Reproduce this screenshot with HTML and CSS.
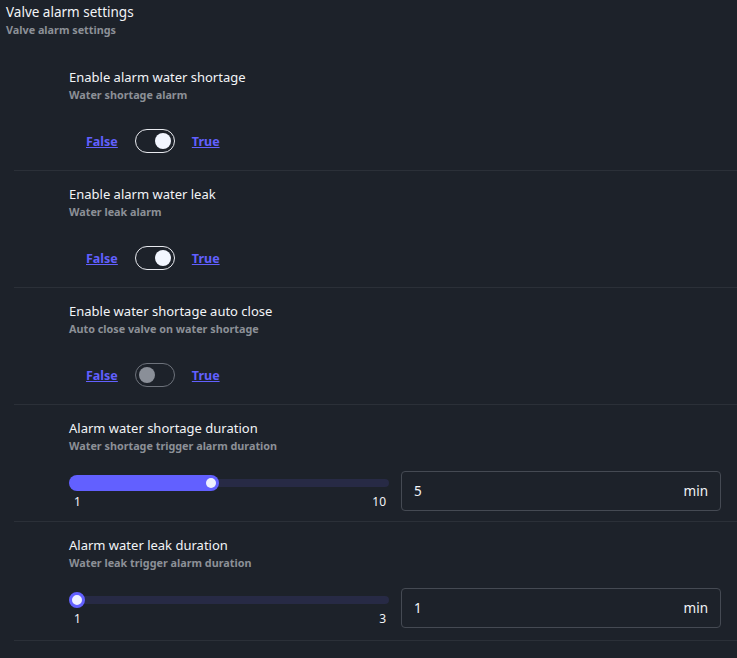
FILE: index.html
```html
<!DOCTYPE html>
<html lang="en">
<head>
    <meta charset="UTF-8">
    <title>Valve alarm settings</title>
    <link rel="stylesheet" href="styles.css">
</head>
<body>
    <div class="header">
        <h1>Valve alarm settings</h1>
        <p>Valve alarm settings</p>
    </div>

    <div class="settings">
        <div class="row">
            <div class="label">Enable alarm water shortage</div>
            <div class="desc">Water shortage alarm</div>
            <div class="toggle-line">
                <a href="#" class="opt">False</a>
                <span class="switch on"><span class="knob"></span></span>
                <a href="#" class="opt">True</a>
            </div>
        </div>

        <div class="row">
            <div class="label">Enable alarm water leak</div>
            <div class="desc">Water leak alarm</div>
            <div class="toggle-line">
                <a href="#" class="opt">False</a>
                <span class="switch on"><span class="knob"></span></span>
                <a href="#" class="opt">True</a>
            </div>
        </div>

        <div class="row">
            <div class="label">Enable water shortage auto close</div>
            <div class="desc">Auto close valve on water shortage</div>
            <div class="toggle-line">
                <a href="#" class="opt">False</a>
                <span class="switch"><span class="knob"></span></span>
                <a href="#" class="opt">True</a>
            </div>
        </div>

        <div class="row">
            <div class="label">Alarm water shortage duration</div>
            <div class="desc">Water shortage trigger alarm duration</div>
            <div class="slider-line">
                <div class="slider">
                    <div class="track">
                        <div class="fill" style="width: 47%"><span class="dot"></span></div>
                    </div>
                    <div class="ends"><span>1</span><span>10</span></div>
                </div>
                <div class="field"><span>5</span><span>min</span></div>
            </div>
        </div>

        <div class="row">
            <div class="label">Alarm water leak duration</div>
            <div class="desc">Water leak trigger alarm duration</div>
            <div class="slider-line">
                <div class="slider">
                    <div class="track">
                        <span class="thumb"></span>
                    </div>
                    <div class="ends"><span>1</span><span>3</span></div>
                </div>
                <div class="field"><span>1</span><span>min</span></div>
            </div>
        </div>
    </div>
</body>
</html>
```

FILE: styles.css
```css
* {
    margin: 0;
    padding: 0;
    box-sizing: border-box;
}

body {
    font-family: 'Noto Sans', 'Open Sans', sans-serif;
    background: #1d222a;
    color: #f2f4f7;
    width: 737px;
    height: 658px;
    overflow: hidden;
}

.header {
    padding: 3px 6px 0;
    height: 54px;
}

.header h1 {
    font-size: 13.5px;
    font-weight: 400;
    line-height: 19px;
}

.header p {
    font-size: 10.8px;
    font-weight: 700;
    color: #8c9097;
    line-height: 15px;
}

.settings {
    margin-left: 14px;
}

.row {
    height: 117px;
    padding: 14px 0 0 55px;
    border-bottom: 1px solid #2b3038;
}

.row:last-child {
    height: 119px;
}

.label {
    font-size: 13px;
    line-height: 19px;
}

.desc {
    font-size: 10.8px;
    font-weight: 700;
    color: #8c9097;
    line-height: 16px;
}

.toggle-line {
    display: flex;
    align-items: center;
    gap: 17px;
    margin-top: 26px;
    padding-left: 17px;
}

.opt {
    color: #6260ff;
    font-size: 12.5px;
    font-weight: 700;
    text-decoration: underline;
}

.switch {
    width: 40px;
    height: 24px;
    border: 1.5px solid #e8eaef;
    border-radius: 12px;
    display: flex;
    align-items: center;
    padding: 0 3px;
}

.switch .knob {
    width: 16px;
    height: 16px;
    border-radius: 50%;
    background: #f2f6ff;
}

.switch.on {
    justify-content: flex-end;
}

.switch:not(.on) {
    border-color: #6d727b;
}

.switch:not(.on) .knob {
    background: #8a8f98;
}

.slider-line {
    display: flex;
    gap: 12px;
    margin-top: 17px;
}

.slider {
    width: 320px;
    padding-top: 4px;
}

.track {
    position: relative;
    height: 8px;
    margin-top: 4px;
    background: #272a45;
    border-radius: 4px;
}

.fill {
    position: relative;
    top: -4px;
    height: 16px;
    background: #6260ff;
    border-radius: 8px;
}

.dot {
    position: absolute;
    right: 3px;
    top: 3px;
    width: 10px;
    height: 10px;
    border-radius: 50%;
    background: #eef0ff;
}

.thumb {
    position: absolute;
    left: 0;
    top: -4px;
    width: 16px;
    height: 16px;
    border-radius: 50%;
    background: #eef0ff;
    border: 3.5px solid #6260ff;
}

.ends {
    display: flex;
    justify-content: space-between;
    padding: 0 3px 0 5px;
    margin-top: 7px;
    font-size: 12px;
    line-height: 16px;
}

.field {
    width: 320px;
    height: 40px;
    border: 1px solid #454a53;
    border-radius: 4px;
    display: flex;
    justify-content: space-between;
    align-items: center;
    padding: 0 12px;
    font-size: 13.5px;
}
```
